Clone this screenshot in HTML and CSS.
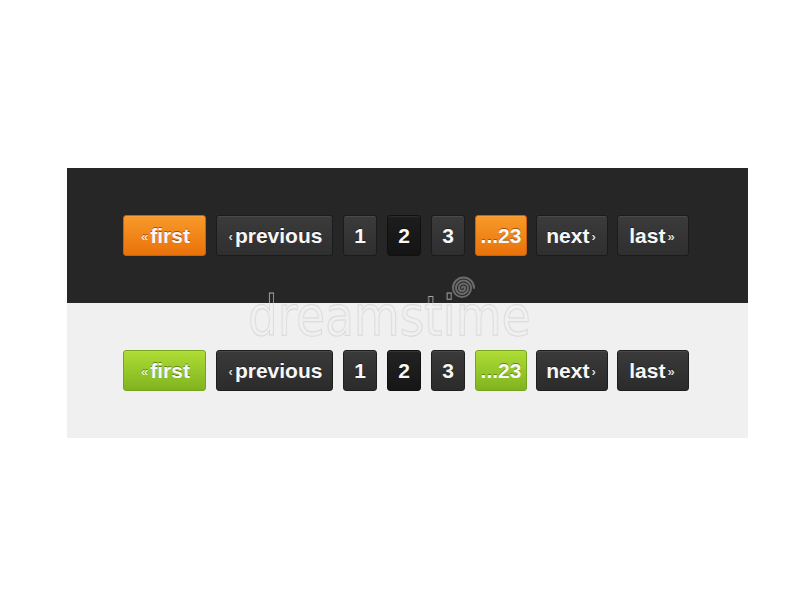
FILE: index.html
```html
<!DOCTYPE html>
<html lang="en">
<head>
    <meta charset="UTF-8">
    <title>Pagination</title>
    <link rel="stylesheet" href="styles.css">
</head>
<body>

    <div class="panel">
        <!-- Versão escura -->
        <div class="strip dark">
            <div class="pager">
                <a class="btn orange first"><span class="arr">«</span>first</a>
                <a class="btn prev"><span class="arr">‹</span>previous</a>
                <a class="btn num">1</a>
                <a class="btn num current">2</a>
                <a class="btn num">3</a>
                <a class="btn orange more">...23</a>
                <a class="btn next">next<span class="arr">›</span></a>
                <a class="btn last">last<span class="arr">»</span></a>
            </div>
        </div>

        <!-- Versão clara -->
        <div class="strip light">
            <div class="pager">
                <a class="btn green first"><span class="arr">«</span>first</a>
                <a class="btn prev"><span class="arr">‹</span>previous</a>
                <a class="btn num">1</a>
                <a class="btn num current">2</a>
                <a class="btn num">3</a>
                <a class="btn green more">...23</a>
                <a class="btn next">next<span class="arr">›</span></a>
                <a class="btn last">last<span class="arr">»</span></a>
            </div>
        </div>

        <div class="watermark">
            <svg class="spiral" width="28" height="28" viewBox="0 0 28 28">
                <path d="M14 14 a1.5 1.5 0 0 1 3 0 a3 3 0 0 1 -6 0 a4.5 4.5 0 0 1 9 0 a6 6 0 0 1 -12 0 a7.5 7.5 0 0 1 15 0 a9 9 0 0 1 -18 0 a10.5 10.5 0 0 1 21 0" fill="none" stroke="#6b6b6b" stroke-width="2" stroke-linecap="round"/>
            </svg>
            <span class="wm-text">dreamstime</span>
        </div>
    </div>

</body>
</html>
```

FILE: styles.css
```css
body {
    margin: 0;
    background-color: #ffffff;
    font-family: "Liberation Sans", Arial, sans-serif;
}
.panel {
    position: relative;
    width: 681px;
    margin: 168px 0 0 67px;
}
.strip {
    height: 135px;
    display: flex;
    align-items: center;
    padding-left: 56px;
    box-sizing: border-box;
}
.dark {
    background-color: #262626;
}
.light {
    background-color: #f0f0f0;
}
.pager {
    display: flex;
    gap: 10px;
}
.btn {
    height: 41px;
    box-sizing: border-box;
    display: flex;
    align-items: center;
    justify-content: center;
    color: #f7f7f7;
    font-weight: bold;
    font-size: 21px;
    border-radius: 3px;
    border: 1px solid #1b1b1b;
    background: linear-gradient(#3b3b3b, #2f2f2f);
    box-shadow: inset 0 1px 0 rgba(255, 255, 255, 0.08);
    text-shadow: 0 -1px 0 rgba(0, 0, 0, 0.4);
}
.light .btn {
    border-color: #1e1e1e;
    background: linear-gradient(#3a3a3a, #2b2b2b);
}
.arr {
    font-size: 13px;
    color: #dcdcdc;
    margin: 2px 2px 0;
}
.first { width: 83px; }
.prev { width: 117px; }
.num { width: 34px; }
.more { width: 52px; }
.next, .last {
    width: 72px;
    margin-left: -1px;
}
.btn.current {
    background: linear-gradient(#1d1d1d, #141414);
    border-color: #111111;
}
.light .btn.current {
    background: linear-gradient(#222222, #161616);
}
.orange {
    background: linear-gradient(#f89a2a, #e9720a);
    border-color: #c9620c;
}
.orange .arr {
    color: #fbe0c0;
}
.light .green {
    background: linear-gradient(#aedc34, #80b420);
    border-color: #76a41c;
}
.green .arr {
    color: #e4f3c0;
}
.watermark {
    position: absolute;
    left: 181px;
    top: 106px;
    width: 320px;
    pointer-events: none;
}
.spiral {
    position: absolute;
    left: 200px;
    top: 0;
}
.wm-text {
    position: absolute;
    left: 0;
    top: 8px;
    font-family: "DejaVu Sans", sans-serif;
    font-size: 56px;
    line-height: 1.2;
    color: transparent;
    -webkit-text-stroke: 1px rgba(208, 208, 208, 0.75);
    transform: scaleX(0.84);
    transform-origin: left top;
    will-change: transform;
}
```
